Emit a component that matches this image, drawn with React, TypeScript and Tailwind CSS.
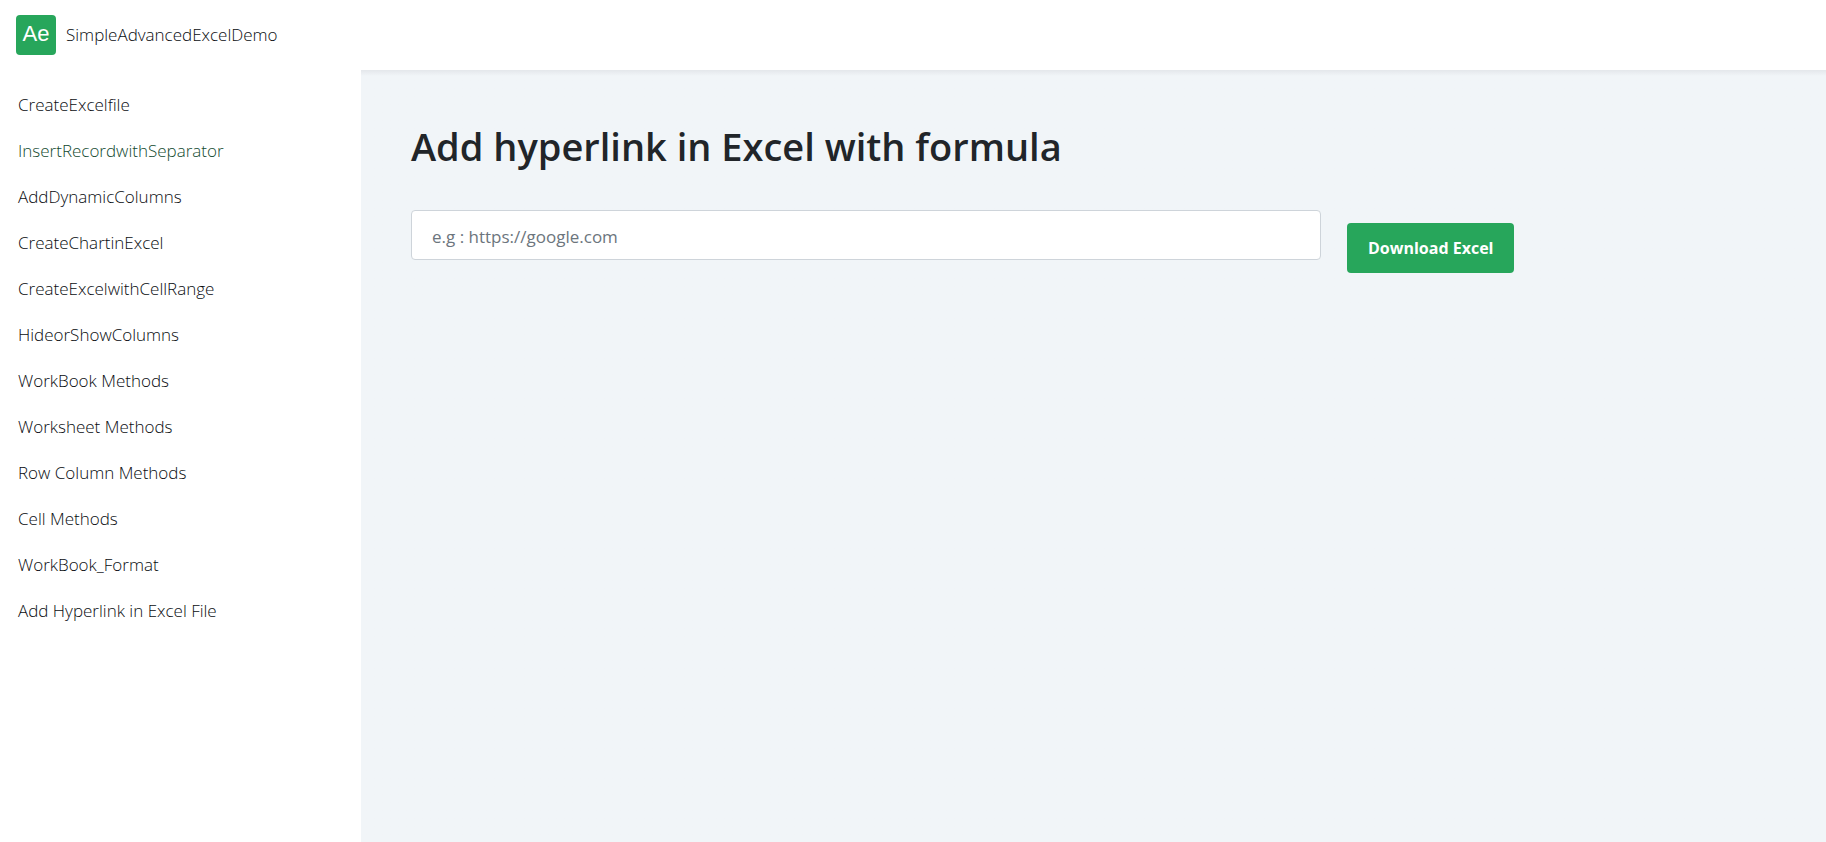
import React from "react";

const links = [
  "CreateExcelfile",
  "InsertRecordwithSeparator",
  "AddDynamicColumns",
  "CreateChartinExcel",
  "CreateExcelwithCellRange",
  "HideorShowColumns",
  "WorkBook Methods",
  "Worksheet Methods",
  "Row Column Methods",
  "Cell Methods",
  "WorkBook_Format",
  "Add Hyperlink in Excel File",
];

const activeLink = "InsertRecordwithSeparator";

function Header() {
  return (
    <header className="flex h-[70px] items-center bg-white px-4">
      <a href="#" className="flex items-center gap-2.5 leading-6 text-[#090c10]">
        <span className="flex size-10 items-center justify-center rounded bg-[#27a65b] pb-0.5 font-['Liberation_Sans',sans-serif] text-[22px] leading-none text-white">
          Ae
        </span>
        <span>SimpleAdvancedExcelDemo</span>
      </a>
    </header>
  );
}

function Sidebar() {
  return (
    <nav aria-label="Examples" className="w-[361px] shrink-0 bg-white pt-3">
      <ul>
        {links.map((link) => (
          <li key={link}>
            <a
              href="#"
              className={
                link === activeLink
                  ? "block px-[18px] py-[11px] leading-6 text-[#124a2f]"
                  : "block px-[18px] py-[11px] leading-6 text-[#090c10]"
              }
            >
              {link}
            </a>
          </li>
        ))}
      </ul>
    </nav>
  );
}

export default function App() {
  return (
    <div className="flex min-h-screen flex-col bg-white font-['Open_Sans',sans-serif] text-[17px] font-light">
      <Header />
      <div className="flex grow">
        <Sidebar />
        <main className="grow bg-[#f1f5f8] bg-linear-to-b from-[#e4e7eb] to-[#f1f5f8] to-[6px] px-[50px] pt-[52px]">
          <h1 className="text-[38px] leading-12 font-semibold text-[#212529]">
            Add hyperlink in Excel with formula
          </h1>
          <form className="mt-10 flex items-start gap-[26px]" onSubmit={(e) => e.preventDefault()}>
            <input
              type="text"
              aria-label="Hyperlink URL"
              placeholder="e.g : https://google.com"
              className="h-[50px] w-2/3 rounded border border-[#ced4da] bg-white px-5 pt-0.5 font-normal text-[#212529] placeholder:text-[#6c757d]"
            />
            <button
              type="submit"
              className="mt-[13px] h-[50px] rounded bg-[#27a65b] px-[21px] text-base font-bold text-white"
            >
              Download Excel
            </button>
          </form>
        </main>
      </div>
    </div>
  );
}
